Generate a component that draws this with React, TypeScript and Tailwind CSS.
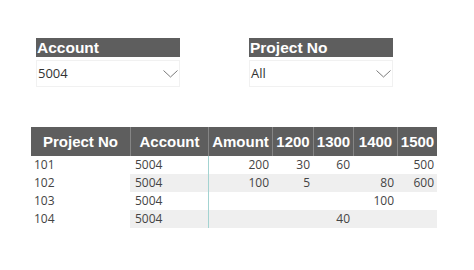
import React from "react";

const cols = ["Project No", "Account", "Amount", "1200", "1300", "1400", "1500"];

const rows: (string | null)[][] = [
  ["101", "5004", "200", "30", "60", null, "500"],
  ["102", "5004", "100", "5", null, "80", "600"],
  ["103", "5004", null, null, null, "100", null],
  ["104", "5004", null, null, "40", null, null],
];

const headFont = { fontFamily: '"Liberation Sans", Arial, sans-serif' };
const bodyFont = { fontFamily: '"Open Sans", "Noto Sans", sans-serif' };

function Chevron() {
  return (
    <svg width="15" height="8" viewBox="0 0 15 8" fill="none">
      <path d="M0.5 0.5 L7.5 7 L14.5 0.5" stroke="#7a7a7a" strokeWidth="1" />
    </svg>
  );
}

function Slicer({ title, value, className }: { title: string; value: string; className: string }) {
  return (
    <div className={`flex w-[144px] flex-col ${className}`}>
      <div
        className="h-[19px] bg-[#5e5e5e] pl-[1px] text-[15.5px] font-bold leading-[20px] text-white"
        style={headFont}
      >
        {title}
      </div>
      <div className="mt-[3px] flex h-[27px] items-center justify-between border border-[#f1f1f1] pl-[1px] pr-[1px]">
        <span className="text-[13px] text-[#333333]" style={bodyFont}>
          {value}
        </span>
        <Chevron />
      </div>
    </div>
  );
}

export default function App() {
  return (
    <div className="h-[270px] w-[474px] overflow-hidden bg-white">
      <div className="flex pt-[38px]">
        <Slicer title="Account" value="5004" className="ml-[36px]" />
        <Slicer title="Project No" value="All" className="ml-[69px]" />
      </div>

      <div className="ml-[31px] mt-[40px] grid w-[406px] grid-cols-[99px_78px_64px_41px_40px_44px_40px]">
        {cols.map((c, i) => (
          <div
            key={c}
            className={`flex h-[29px] items-center justify-center bg-[#5e5e5e] pt-[1px] text-[15px] font-bold text-white ${
              i > 0 ? "border-l border-[#858585]" : ""
            }`}
            style={headFont}
          >
            {c}
          </div>
        ))}
        {rows.map((r, ri) =>
          r.map((v, ci) => {
            const shaded = ri % 2 === 1 && ci > 0;
            const align = ci < 2 ? "justify-start" : "justify-end";
            const pad = ci === 0 ? "pl-[3px]" : ci === 1 ? "pl-[5px]" : "pr-[3px]";
            const teal = ci === 2 ? "border-l border-[#a3d3d1]" : "";
            return (
              <div
                key={`${ri}-${ci}`}
                className={`flex h-[18px] items-center text-[12px] text-[#444444] ${align} ${pad} ${teal} ${
                  shaded ? "bg-[#efefef]" : "bg-white"
                }`}
                style={bodyFont}
              >
                {v}
              </div>
            );
          })
        )}
      </div>
    </div>
  );
}
